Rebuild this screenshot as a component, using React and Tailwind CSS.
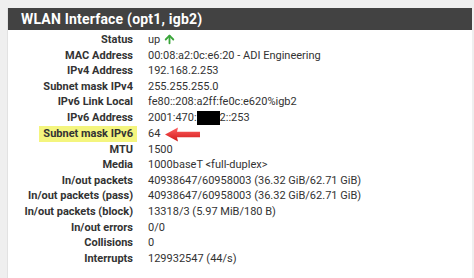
import { ArrowUp } from "lucide-react";

const rows = [
  ["Status", "status"],
  ["MAC Address", "00:08:a2:0c:e6:20 - ADI Engineering"],
  ["IPv4 Address", "192.168.2.253"],
  ["Subnet mask IPv4", "255.255.255.0"],
  ["IPv6 Link Local", "fe80::208:a2ff:fe0c:e620%igb2"],
  ["IPv6 Address", "ipv6"],
  ["Subnet mask IPv6", "mask6"],
  ["MTU", "1500"],
  ["Media", "1000baseT <full-duplex>"],
  ["In/out packets", "40938647/60958003 (36.32 GiB/62.71 GiB)"],
  ["In/out packets (pass)", "40938647/60958003 (36.32 GiB/62.71 GiB)"],
  ["In/out packets (block)", "13318/3 (5.97 MiB/180 B)"],
  ["In/out errors", "0/0"],
  ["Collisions", "0"],
  ["Interrupts", "129932547 (44/s)"],
];

function Value({ v }) {
  if (v === "status") {
    return (
      <span className="flex items-center gap-[3px]">
        up
        <ArrowUp className="h-[13px] w-[13px] text-[#3aa53a]" strokeWidth={3.4} />
      </span>
    );
  }
  if (v === "ipv6") {
    return (
      <span className="flex items-center">
        2001:470:
        <span className="inline-block h-[14px] w-[23px] bg-black" />
        2::253
      </span>
    );
  }
  if (v === "mask6") {
    return (
      <span className="flex items-center gap-[5px]">
        64
        <svg width="36" height="15" viewBox="0 0 36 15" className="mt-[1px]">
          <defs>
            <linearGradient id="ar" x1="0" y1="0" x2="0" y2="1">
              <stop offset="0" stopColor="#ff6060" />
              <stop offset="1" stopColor="#d01818" />
            </linearGradient>
          </defs>
          <polygon
            points="0,7.5 13,0.5 12,4.8 35,4.8 35,10.2 12,10.2 13,14.5"
            fill="url(#ar)"
          />
        </svg>
      </span>
    );
  }
  return v;
}

export default function App() {
  return (
    <div
      className="h-[278px] w-[474px] overflow-hidden bg-[#efefef] pt-[8px] pl-[7px] pr-[2px]"
      style={{ fontFamily: "Roboto, 'Liberation Sans', sans-serif" }}
    >
      <div className="h-full border-l border-[#e2e2e2] bg-white">
        <div className="flex h-[22px] items-center bg-[#424242] pl-[13px] text-[14px] font-bold tracking-[0.2px] text-white">
          WLAN Interface (opt1, igb2)
        </div>
        <div className="grid grid-cols-[125px_1fr] gap-x-[15px] pt-[2px] text-[11px] leading-[15.6px] text-[#333]">
          {rows.map(([label, v]) => (
            <div key={label} className="contents">
              <div className="flex justify-end font-bold">
                <span
                  className={
                    label === "Subnet mask IPv6"
                      ? "bg-[#f4f57e] px-[4px] -mr-[4px]"
                      : ""
                  }
                >
                  {label}
                </span>
              </div>
              <div className="flex whitespace-nowrap">
                <Value v={v} />
              </div>
            </div>
          ))}
        </div>
      </div>
    </div>
  );
}
